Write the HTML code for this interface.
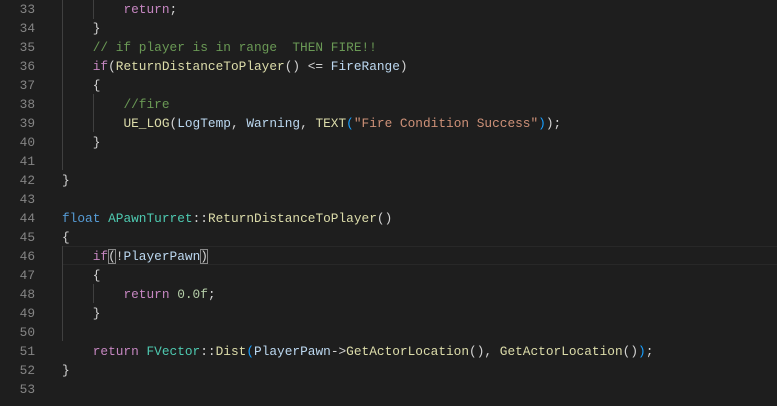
<!DOCTYPE html>
<html><head><meta charset="utf-8"><style>
html,body{margin:0;padding:0;background:#1e1e1e;width:777px;height:406px;overflow:hidden}
.w{position:relative;font-family:"Liberation Mono",monospace;font-size:12.8px;color:#d4d4d4}
.l{position:absolute;left:0;height:19px;line-height:19px;white-space:pre;width:777px}
.n{position:absolute;right:742px;color:#858585;text-align:right}
.c{position:absolute;left:62px}
.g{position:absolute;width:1px;background:#404040}
.cur{position:absolute;left:62px;right:0;height:17px;border:1px solid #282828;border-right:none}
.k{color:#c586c0}.b{color:#569cd6}.f{color:#dcdcaa}.t{color:#4ec9b0}.v{color:#bcd8f0}.cm{color:#6a9955}.s{color:#ce9178}.nm{color:#b5cea8}.p{color:#179fff}
.br{outline:1px solid #888;outline-offset:-1px}
</style></head><body><div class="w">
<div class="cur" style="top:246px"></div>
<div class="g" style="left:62px;top:0;height:170px"></div>
<div class="g" style="left:93px;top:0;height:19px"></div>
<div class="g" style="left:93px;top:94px;height:38px"></div>
<div class="g" style="left:62px;top:246px;height:95px"></div>
<div class="g" style="left:93px;top:284px;height:19px"></div>
<div class="l" style="top:0px"><span class="n">33</span><span class="c">        <span class="k">return</span>;</span></div>
<div class="l" style="top:19px"><span class="n">34</span><span class="c">    }</span></div>
<div class="l" style="top:38px"><span class="n">35</span><span class="c">    <span class="cm">// if player is in range  THEN FIRE!!</span></span></div>
<div class="l" style="top:57px"><span class="n">36</span><span class="c">    <span class="k">if</span>(<span class="f">ReturnDistanceToPlayer</span>() &lt;= <span class="v">FireRange</span>)</span></div>
<div class="l" style="top:76px"><span class="n">37</span><span class="c">    {</span></div>
<div class="l" style="top:95px"><span class="n">38</span><span class="c">        <span class="cm">//fire</span></span></div>
<div class="l" style="top:114px"><span class="n">39</span><span class="c">        <span class="f">UE_LOG</span>(<span class="v">LogTemp</span>, <span class="v">Warning</span>, <span class="f">TEXT</span><span class="p">(</span><span class="s">"Fire Condition Success"</span><span class="p">)</span>);</span></div>
<div class="l" style="top:133px"><span class="n">40</span><span class="c">    }</span></div>
<div class="l" style="top:152px"><span class="n">41</span></div>
<div class="l" style="top:171px"><span class="n">42</span><span class="c">}</span></div>
<div class="l" style="top:190px"><span class="n">43</span></div>
<div class="l" style="top:209px"><span class="n">44</span><span class="c"><span class="b">float</span> <span class="t">APawnTurret</span>::<span class="f">ReturnDistanceToPlayer</span>()</span></div>
<div class="l" style="top:228px"><span class="n">45</span><span class="c">{</span></div>
<div class="l" style="top:247px"><span class="n">46</span><span class="c">    <span class="k">if</span><span class="br">(</span>!<span class="v">PlayerPawn</span><span class="br">)</span></span></div>
<div class="l" style="top:266px"><span class="n">47</span><span class="c">    {</span></div>
<div class="l" style="top:285px"><span class="n">48</span><span class="c">        <span class="k">return</span> <span class="nm">0.0f</span>;</span></div>
<div class="l" style="top:304px"><span class="n">49</span><span class="c">    }</span></div>
<div class="l" style="top:323px"><span class="n">50</span></div>
<div class="l" style="top:342px"><span class="n">51</span><span class="c">    <span class="k">return</span> <span class="t">FVector</span>::<span class="f">Dist</span><span class="p">(</span><span class="v">PlayerPawn</span>-&gt;<span class="f">GetActorLocation</span>(), <span class="f">GetActorLocation</span>()<span class="p">)</span>;</span></div>
<div class="l" style="top:361px"><span class="n">52</span><span class="c">}</span></div>
<div class="l" style="top:380px"><span class="n">53</span></div>
</div></body></html>
